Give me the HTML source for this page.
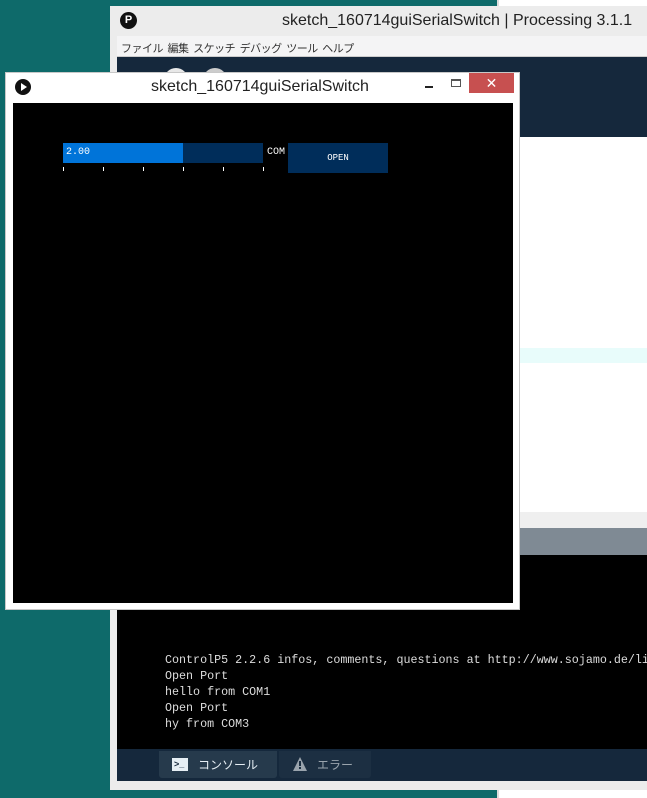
<!DOCTYPE html>
<html><head><meta charset="utf-8"><style>
*{margin:0;padding:0;box-sizing:border-box}
html,body{width:647px;height:798px;overflow:hidden}
body{background:#0e6a6a;position:relative;font-family:"Liberation Sans","Noto Sans CJK JP",sans-serif}
#w{position:absolute;left:0;top:0;width:647px;height:798px;overflow:hidden}
.a{position:absolute}
.mono{font-family:"Liberation Mono","DejaVu Sans Mono",monospace}
</style></head><body><div id="w">
<div class="a" style="left:497px;top:0;width:150px;height:7px;background:#fff;border-left:2px solid #ddd"></div>
<div class="a" style="left:497px;top:788px;width:150px;height:10px;background:#fff;border-left:2px solid #ddd"></div>
<div class="a" style="left:110px;top:6px;width:537px;height:784px;background:#ececec"></div>
<div class="a" style="left:120px;top:12px;width:17px;height:17px;border-radius:50%;background:#111;color:#fff;font-size:11px;line-height:17px;text-align:center;font-weight:bold">P</div>
<div class="a" style="left:282px;top:12px;font-size:16px;color:#222;white-space:nowrap">sketch_160714guiSerialSwitch | Processing 3.1.1</div>
<div class="a" style="left:117px;top:36px;width:530px;height:21px;background:#f4f4f5;border-bottom:1px solid #ccc"></div>
<div class="a" style="left:121px;top:40px;font-size:11px;color:#333;white-space:nowrap;letter-spacing:-0.5px;word-spacing:2px">ファイル 編集 スケッチ デバッグ ツール ヘルプ</div>
<div class="a" style="left:117px;top:57px;width:530px;height:80px;background:#15283c"></div>
<div class="a" style="left:164px;top:68px;width:24px;height:24px;border-radius:50%;background:#e8e8e8"></div>
<div class="a" style="left:203px;top:68px;width:24px;height:24px;border-radius:50%;background:#ccc"></div>
<div class="a" style="left:117px;top:137px;width:530px;height:375px;background:#fff"></div>
<div class="a" style="left:117px;top:348px;width:530px;height:15px;background:#e8fcfb"></div>
<div class="a" style="left:117px;top:512px;width:530px;height:16px;background:#efefef"></div>
<div class="a" style="left:117px;top:528px;width:530px;height:27px;background:#7f8a94"></div>
<div class="a" style="left:117px;top:555px;width:530px;height:194px;background:#000;overflow:hidden">
<div class="a mono" style="left:48px;top:97px;font-size:11.7px;line-height:16px;color:#ddd;white-space:pre">ControlP5 2.2.6 infos, comments, questions at http://www.sojamo.de/libraries/controlP5
Open Port
hello from COM1
Open Port
hy from COM3</div></div>
<div class="a" style="left:117px;top:749px;width:530px;height:32px;background:#15283c"></div>
<div class="a" style="left:159px;top:751px;width:118px;height:27px;background:#263a4c;border-radius:0 0 3px 3px"></div>
<div class="a" style="left:279px;top:751px;width:92px;height:27px;background:#1c2f42;border-radius:0 0 3px 3px"></div>
<div class="a" style="left:172px;top:758px;width:16px;height:13px;background:#e6eef4;color:#15283c;font-size:9px;line-height:12px;font-weight:bold;padding-left:2px">&gt;_</div>
<div class="a" style="left:198px;top:756px;font-size:12px;color:#e6eef4;white-space:nowrap">コンソール</div>
<svg class="a" style="left:292px;top:756px" width="16" height="16"><path d="M8 1L15 15H1Z" fill="#9aa4ad"/><rect x="7" y="5" width="2" height="5" fill="#1c2f42"/><rect x="7" y="11" width="2" height="2" fill="#1c2f42"/></svg>
<div class="a" style="left:317px;top:756px;font-size:12px;color:#9aa4ad;white-space:nowrap">エラー</div>
<div class="a" style="left:5px;top:72px;width:515px;height:538px;background:#fff;border:1px solid #c8c8c8"></div>
<div class="a" style="left:15px;top:79px;width:16px;height:16px;border-radius:50%;background:#111"></div>
<div class="a" style="left:21px;top:83px;width:0;height:0;border-left:6px solid #fff;border-top:4px solid transparent;border-bottom:4px solid transparent"></div>
<div class="a" style="left:151px;top:78px;font-size:16px;color:#222;white-space:nowrap">sketch_160714guiSerialSwitch</div>
<div class="a" style="left:425px;top:86px;width:8px;height:2px;background:#222"></div>
<div class="a" style="left:451px;top:79px;width:10px;height:8px;border:1px solid #555;border-top-width:2px"></div>
<div class="a" style="left:469px;top:73px;width:45px;height:20px;background:#c75050;color:#fff;text-align:center;font-size:14px;line-height:20px">✕</div>
<div class="a" style="left:13px;top:103px;width:500px;height:500px;background:#000"></div>
<div class="a" style="left:63px;top:143px;width:120px;height:20px;background:#0074d9"></div>
<div class="a" style="left:183px;top:143px;width:80px;height:20px;background:#002d5a"></div>
<div class="a mono" style="left:66px;top:147px;font-size:10px;color:#fff">2.00</div>
<div class="a mono" style="left:267px;top:147px;font-size:10px;color:#fff">COM</div>
<div class="a" style="left:63px;top:167px;width:1px;height:4px;background:#fff"></div>
<div class="a" style="left:103px;top:167px;width:1px;height:4px;background:#fff"></div>
<div class="a" style="left:143px;top:167px;width:1px;height:4px;background:#fff"></div>
<div class="a" style="left:183px;top:167px;width:1px;height:4px;background:#fff"></div>
<div class="a" style="left:223px;top:167px;width:1px;height:4px;background:#fff"></div>
<div class="a" style="left:263px;top:167px;width:1px;height:4px;background:#fff"></div>
<div class="a mono" style="left:288px;top:143px;width:100px;height:30px;background:#002d5a;color:#fff;font-size:9px;line-height:31px;text-align:center">OPEN</div>
</div></body></html>
